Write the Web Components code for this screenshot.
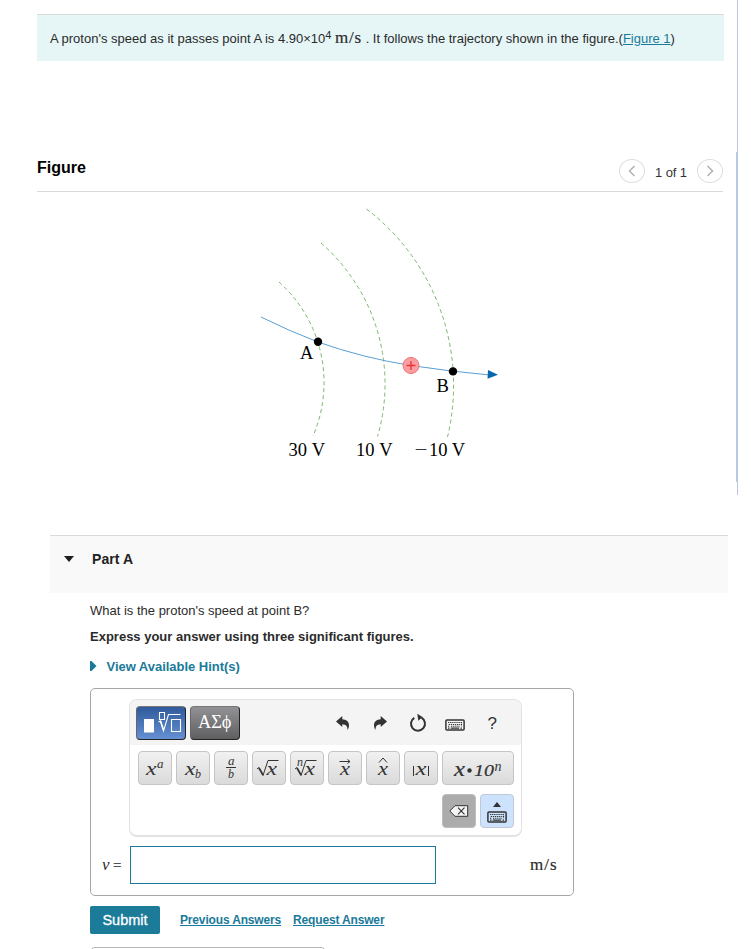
<!DOCTYPE html>
<html lang="en">
<head>
<meta charset="utf-8">
<title>Proton speed</title>
<style>
html,body{margin:0;padding:0;background:#fff}
body{font:13px/16px "Liberation Sans",Arial,sans-serif;color:#2b2b2b;width:751px;height:949px;overflow:hidden}
</style>
</head>
<body>
<problem-page>
  <problem-banner slot="intro"></problem-banner>
  <figure-panel slot="figure"><field-diagram></field-diagram></figure-panel>
  <part-header slot="part">Part A</part-header>
  <part-body slot="part"></part-body>
</problem-page>
<script>
function define(name, html){
  const t=document.createElement('template');
  t.innerHTML=html;
  customElements.define(name, class extends HTMLElement{
    constructor(){super();this.attachShadow({mode:'open'}).appendChild(t.content.cloneNode(true));}
  });
}

define('problem-page', `
<style>
:host{display:grid;grid-template-columns:736px 2px;width:751px;height:949px;overflow:hidden}
main{display:flex;flex-direction:column;padding-top:14px;min-width:0}
aside{display:flex;flex-direction:column;align-items:flex-end}
i{display:block;width:1px;background:#bcc5dc}
.a{height:152px}.b{width:2px;height:330px;background:#b6cae1}.c{height:13px}
</style>
<main><slot name="intro"></slot><slot name="figure"></slot><slot name="part"></slot></main>
<aside><i class="a"></i><i class="b"></i><i class="c"></i></aside>`);

define('problem-banner', `
<style>
:host{display:flex;align-items:center;box-sizing:border-box;width:687px;height:47px;margin-left:37px;padding:2px 0 0 13px;background:#e6f6f6;border-top:1px solid #d9dcdb;white-space:pre}
p{margin:0;line-height:18px}
sup{font-size:11px;line-height:0;vertical-align:4.500px}
.m{font:17px/0 "Liberation Serif",serif;letter-spacing:.8px;-webkit-text-stroke:.2px}
a{color:#1a7a9a;text-decoration:underline}
</style>
<p>A proton's speed as it passes point A is 4.90×10<sup>4</sup> <span class="m">m/s</span> . It follows the trajectory shown in the figure.(<a>Figure 1</a>)</p>`);

define('round-button', `
<style>
:host{display:flex;box-sizing:border-box;width:26px;height:24px;margin-top:-2px;border:1px solid #dedede;border-radius:50%;align-items:center;justify-content:center}
svg{width:8px;height:12px;overflow:visible}
path{fill:none;stroke:#b4b4b4;stroke-width:1.6}
:host([dir-next]) svg{transform:scaleX(-1)}
</style>
<svg viewBox="0 0 8 12"><path d="M6.5 1 1.5 6l5 5"/></svg>`);

define('figure-panel', `
<style>
:host{display:block;margin:91px 0 0 37px;width:687px}
header{display:flex;align-items:center;justify-content:space-between;box-sizing:border-box;width:686px;height:40px;border-bottom:1px solid #dadada}
h2{margin:0 0 8px;font-size:16px;line-height:20px;color:#000}
nav{display:flex;align-items:center;gap:10px;color:#333}
span{padding-top:2px;letter-spacing:-.1px}
</style>
<header><h2>Figure</h2><nav><round-button></round-button><span>1 of 1</span><round-button dir-next></round-button></nav></header>
<slot></slot>`);

define('field-diagram', `
<style>
:host{display:block;height:343px}
svg{display:block}
.eq{fill:none;stroke:#79b86d;stroke-width:1;stroke-dasharray:4 3}
text{font:18.500px "Liberation Serif",serif;fill:#000}
</style>
<svg width="687" height="343" viewBox="37 192 687 343">
<path class="eq" d="M279 282A134.8 134.8 0 0 1 313 436"/>
<path class="eq" d="M321 243A187 187 0 0 1 377.500 436.500"/>
<path class="eq" d="M366.500 209A222 222 0 0 1 447.500 437"/>
<path d="M261 317Q289 331 318 342Q363 358 411 365.500Q450 371.500 490 375" fill="none" stroke="#5b9fd2"/>
<path d="M488 370l10 4.800-10.500 4z" fill="#0868ad"/>
<circle cx="318" cy="341.800" r="4.200"/><circle cx="453" cy="371.400" r="4.200"/>
<circle cx="411" cy="365.500" r="8" fill="#fb9ea1" stroke="#ef7377"/>
<path d="M406.500 365.500h9M411 361v9" stroke="#e7323b" stroke-width="1.300"/>
<text x="300" y="358.500">A</text><text x="436.500" y="391.500">B</text>
<text x="288.500" y="456" textLength="36.500">30 V</text><text x="356" y="456" textLength="36.500">10 V</text><text y="456"><tspan x="414.500" textLength="13" lengthAdjust="spacingAndGlyphs">−</tspan><tspan x="429">10 V</tspan></text>
</svg>`);

define('part-header', `
<style>
:host{display:flex;box-sizing:border-box;width:678px;height:58px;margin-left:50px;padding:14px 0 0 14px;gap:18px;background:#f9f9f9;border-top:1px solid #dadada;font-weight:bold;font-size:14px;line-height:18px;color:#222;letter-spacing:.1px}
svg{width:10px;height:6px;margin-top:6px}
</style>
<svg viewBox="0 0 10 6"><path d="M0 0h10L5 6z" fill="#1f1f1f"/></svg><slot></slot>`);

define('part-body', `
<style>
:host{display:flex;flex-direction:column;width:484px;margin-left:90px;padding-top:10px}
p{margin:0 0 10px;height:16px;white-space:nowrap}
.hint{display:flex;gap:9.500px;margin:4px 0 13px;color:#1a7a9a;font-weight:bold;height:16px;letter-spacing:-.03px}
.hint svg{width:7px;height:10px;margin-top:2px}
.actions{display:flex;align-items:center;margin-top:10px;height:28px;font-weight:bold;font-size:12px;white-space:nowrap}
button{box-sizing:border-box;width:70px;height:28px;border:0;border-radius:2px;background:#1b7b99;color:#fff;font:14.500px/28px "Liberation Sans",sans-serif;padding:0;margin-right:20px;-webkit-text-stroke:.3px #fff}
a{color:#1a7a9a;text-decoration:underline;letter-spacing:-.16px;margin-right:12px}
.next{box-sizing:border-box;width:236px;height:12px;margin-top:13px;border:1px solid #b5b5b5;border-radius:5px}
</style>
<p>What is the proton's speed at point B?</p>
<p><b>Express your answer using three significant figures.</b></p>
<div class="hint"><svg viewBox="0 0 7 10"><path d="M0 0h1.500L6.500 5 1.500 10H0z" fill="#1a7a9a"/></svg><span>View Available Hint(s)</span></div>
<answer-panel></answer-panel>
<div class="actions"><button>Submit</button><a>Previous Answers</a><a>Request Answer</a></div>
<div class="next"></div>`);

define('answer-panel', `
<style>
:host{display:block;box-sizing:border-box;width:484px;height:208px;border:1px solid #a6a6a6;border-radius:5px;padding:10px 0 0 38px}
.row{display:grid;grid-template-columns:28px 306px auto;align-items:center;margin:9px 0 0 -27px;height:38px;font:16px "Liberation Serif",serif}
.field{box-sizing:border-box;height:38px;border:1px solid #1b7b99;background:#fff}
.u{margin-left:94px;font-size:17px;letter-spacing:1px;-webkit-text-stroke:.2px}
svg{display:block;overflow:visible}
svg text{font-family:"Liberation Serif",serif;fill:#2b2b2b}
</style>
<equation-palette></equation-palette>
<div class="row"><svg width="22" height="20"><text x="0" y="15" font-size="17" font-style="italic">v</text><text x="11" y="15" font-size="15" stroke="#2b2b2b" stroke-width=".2">=</text></svg><div class="field"></div><span class="u">m/s</span></div>`);

define('keyboard-glyph', `
<style>:host{display:block;width:20px;height:12px}svg{display:block}</style>
<svg width="20" height="12" viewBox="0 0 20 12"><rect x=".9" y=".9" width="18.200" height="10.200" rx="1" fill="none" stroke="#333" stroke-width="1.500"/><path d="M3 3.500h14M3.700 5.500h11.500M3 7.300h2M6 7.300h9M16.500 3v4.500" stroke="#333" stroke-width="1.100" stroke-dasharray="1.300 .8"/><path d="M3 9.100h1.500M5.700 9.100h8.500M15.500 9.100H17" stroke="#333" stroke-width="1.100"/></svg>`);

define('math-key', `
<style>
:host{display:flex;box-sizing:border-box;width:34px;height:34px;border:1px solid #c5c5c5;border-radius:4px;background:linear-gradient(#f1f1f1,#dadada);align-items:center;justify-content:center;flex:none}
:host([wide]){width:72px}
:host([tab]){width:50px;border-color:#777 #222 #222 #666;background:linear-gradient(#929296,#5f5f61)}
:host([tab=active]){background:linear-gradient(#2f5b9b,#6590d3)}
:host([erase]){background:#acacac;border-color:#bdbdbd}
:host([toggle]){background:#cde3fd;border-color:#bfc8d3}
::slotted(svg){display:block;flex:none;overflow:visible}
</style><slot></slot>`);

define('equation-palette', `
<style>
:host{display:block;box-sizing:border-box;width:393px;height:138px;border:2px solid #e2e2e2;border-width:1px 1px 2px;border-radius:8px;overflow:hidden;background:#fff}
.bar{display:flex;align-items:center;height:45px;padding:0 0 0 6px;background:#f4f4f4;gap:4px}
.tools{display:grid;grid-template-columns:repeat(5,37.250px);margin-left:80.500px;justify-items:center;align-items:center}
.keys{display:flex;gap:4px;padding:6px 0 0 8px}
.low{display:flex;gap:4px;padding:9px 0 0 312px}
.stack{display:flex;flex-direction:column;align-items:center;gap:4px;padding-top:2px}
svg{overflow:visible;display:block}
text{font-family:"DejaVu Serif","Liberation Serif",serif;fill:#333}
.i{font-family:"Liberation Serif",serif;font-style:italic}
.l{fill:none;stroke:#333;stroke-width:1}
</style>
<div class="bar">
<math-key tab="active"><svg width="48" height="32" viewBox="0 0 48 32"><rect x="7" y="12" width="10" height="13.500" fill="#fff"/><path d="M22.500 5.500h5v7h-5zM21.500 15l2-1.200 3 10 5-16.300h12M34.500 12.500h9v12h-9z" fill="none" stroke="#fff" stroke-width="1.100"/><path d="M23.500 14l3 9" stroke="#fff" stroke-width="1.600"/></svg></math-key>
<math-key tab><svg width="48" height="32" viewBox="0 0 48 32"><text x="7" y="21" style="font-size:18px;font-family:Liberation Serif,serif;fill:#fff" textLength="33.500" lengthAdjust="spacingAndGlyphs">ΑΣϕ</text></svg></math-key>
<div class="tools">
<svg width="14" height="14" viewBox="0 0 14 14"><path d="M0 5.500 6.300 0v3.200c4 .2 6.700 2.300 6.700 6 0 2-.8 3.800-1.500 4.800.1-3.600-1.300-5.600-5.200-5.800V11z" fill="#333"/></svg>
<svg width="14" height="14" viewBox="0 0 14 14"><path d="M14 5.500 7.700 0v3.200c-4 .2-6.700 2.300-6.700 6 0 2 .8 3.800 1.500 4.800-.1-3.600 1.300-5.600 5.200-5.800V11z" fill="#333"/></svg>
<svg width="16" height="18" viewBox="0 0 16 18"><path d="M4.300 3.800A7 7 0 1 0 11.500 3.700" fill="none" stroke="#333" stroke-width="2"/><path d="M7.300-.3 12.500 3 8.300 6.700z" fill="#333"/></svg>
<keyboard-glyph style="margin-top:4px"></keyboard-glyph>
<svg width="10" height="18" viewBox="0 0 10 18"><text x=".5" y="15" style="font:17px Liberation Sans,sans-serif">?</text></svg>
</div></div>
<div class="keys">
<math-key><svg width="32" height="32"><text class="i" x="7" y="23" font-size="19" textLength="10.500" lengthAdjust="spacingAndGlyphs">x</text><text class="i" x="18" y="16" font-size="13">a</text></svg></math-key>
<math-key><svg width="32" height="32"><text class="i" x="8" y="23" font-size="19" textLength="10.500" lengthAdjust="spacingAndGlyphs">x</text><text class="i" x="18" y="26" font-size="12">b</text></svg></math-key>
<math-key><svg width="32" height="32"><text class="i" x="13" y="12.500" font-size="13">a</text><path class="l" d="M11 15.500h10"/><text class="i" x="13" y="26" font-size="12">b</text></svg></math-key>
<math-key><svg width="32" height="32"><path class="l" d="M4 17l2-1.500 4 8 5-15h10.500"/><path d="M6 16l4 7" stroke="#333" stroke-width="1.700"/><text class="i" x="13.500" y="23" font-size="19" textLength="10.500" lengthAdjust="spacingAndGlyphs">x</text></svg></math-key>
<math-key><svg width="32" height="32"><path class="l" d="M4 17l2-1.500 4 8 5-15h10.500"/><path d="M6 16l4 7" stroke="#333" stroke-width="1.700"/><text class="i" x="6" y="13.500" font-size="12">n</text><text class="i" x="13.500" y="23" font-size="19" textLength="10.500" lengthAdjust="spacingAndGlyphs">x</text></svg></math-key>
<math-key><svg width="32" height="32"><path class="l" d="M10.500 9.500h10.500M18.500 7.500l2.500 2-2.500 2"/><text class="i" x="11" y="23" font-size="19" textLength="10" lengthAdjust="spacingAndGlyphs">x</text></svg></math-key>
<math-key><svg width="32" height="32"><path class="l" d="M12 10.500l4-4.500 4 4.500"/><text class="i" x="11" y="23" font-size="19" textLength="10" lengthAdjust="spacingAndGlyphs">x</text></svg></math-key>
<math-key><svg width="32" height="32"><path class="l" d="M8.500 14v10M23.500 14v10"/><text class="i" x="10.500" y="23" font-size="19" textLength="11" lengthAdjust="spacingAndGlyphs">x</text></svg></math-key>
<math-key wide><svg width="70" height="32"><text class="i" x="11" y="24" font-size="20" textLength="11" lengthAdjust="spacingAndGlyphs" stroke="#333" stroke-width=".2">x</text><circle cx="26.500" cy="18.500" r="2.200" fill="#333"/><text class="i" x="31" y="24" font-size="17" textLength="20" lengthAdjust="spacingAndGlyphs" stroke="#333" stroke-width=".2">10</text><text class="i" x="51.500" y="19" font-size="14">n</text></svg></math-key>
</div>
<div class="low">
<math-key erase><svg width="20" height="12" viewBox="0 0 20 12"><path d="M.8 6 6 .7h12.700v10.600H6z" fill="#f4f4f4" stroke="#333"/><path d="M9 2.700l6.500 6.600M15.500 2.700 9 9.300" stroke="#333" stroke-width="1.100"/></svg></math-key>
<math-key toggle><div class="stack"><svg width="8" height="5"><path d="M0 5 4 0l4 5z" fill="#333"/></svg><keyboard-glyph></keyboard-glyph></div></math-key>
</div>`);
</script>
</body>
</html>
